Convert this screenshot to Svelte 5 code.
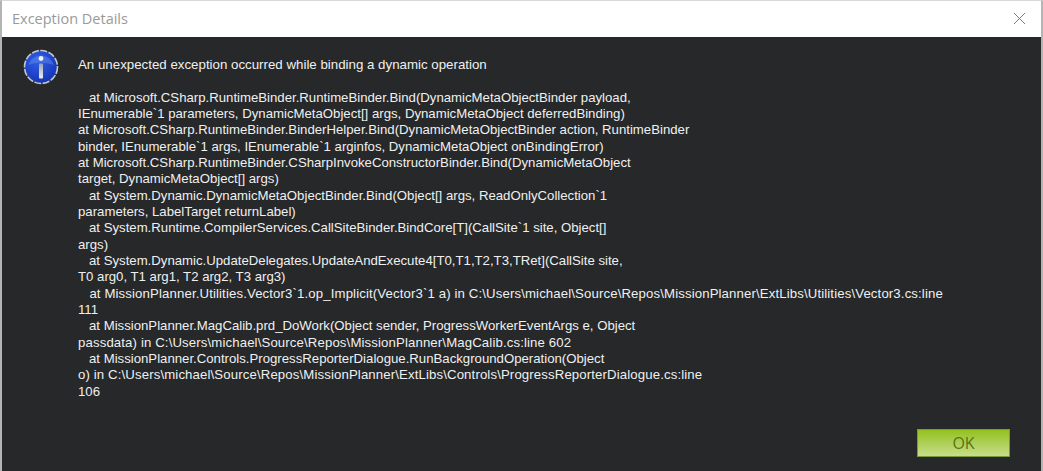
<script>
  const title = 'Exception Details'
  const message = 'An unexpected exception occurred while binding a dynamic operation'
  const trace = [
    '   at Microsoft.CSharp.RuntimeBinder.RuntimeBinder.Bind(DynamicMetaObjectBinder payload,',
    'IEnumerable`1 parameters, DynamicMetaObject[] args, DynamicMetaObject deferredBinding)',
    'at Microsoft.CSharp.RuntimeBinder.BinderHelper.Bind(DynamicMetaObjectBinder action, RuntimeBinder',
    'binder, IEnumerable`1 args, IEnumerable`1 arginfos, DynamicMetaObject onBindingError)',
    'at Microsoft.CSharp.RuntimeBinder.CSharpInvokeConstructorBinder.Bind(DynamicMetaObject',
    'target, DynamicMetaObject[] args)',
    '   at System.Dynamic.DynamicMetaObjectBinder.Bind(Object[] args, ReadOnlyCollection`1',
    'parameters, LabelTarget returnLabel)',
    '   at System.Runtime.CompilerServices.CallSiteBinder.BindCore[T](CallSite`1 site, Object[]',
    'args)',
    '   at System.Dynamic.UpdateDelegates.UpdateAndExecute4[T0,T1,T2,T3,TRet](CallSite site,',
    'T0 arg0, T1 arg1, T2 arg2, T3 arg3)',
    '   at MissionPlanner.Utilities.Vector3`1.op_Implicit(Vector3`1 a) in C:\\Users\\michael\\Source\\Repos\\MissionPlanner\\ExtLibs\\Utilities\\Vector3.cs:line',
    '111',
    '   at MissionPlanner.MagCalib.prd_DoWork(Object sender, ProgressWorkerEventArgs e, Object',
    'passdata) in C:\\Users\\michael\\Source\\Repos\\MissionPlanner\\MagCalib.cs:line 602',
    '   at MissionPlanner.Controls.ProgressReporterDialogue.RunBackgroundOperation(Object',
    'o) in C:\\Users\\michael\\Source\\Repos\\MissionPlanner\\ExtLibs\\Controls\\ProgressReporterDialogue.cs:line',
    '106'
  ]
</script>

<div class="window">
  <header class="titlebar">
    <span class="title">{title}</span>
    <svg class="close" viewBox="0 0 14 14" aria-label="Close">
      <path d="M1 1 L13 13 M13 1 L1 13" />
    </svg>
  </header>
  <main class="body">
    <div class="content">
      <svg class="info" viewBox="0 0 36 36" aria-hidden="true">
        <defs>
          <radialGradient id="ball" cx="0.4" cy="0.3" r="0.8">
            <stop offset="0" stop-color="#2f5fe8" />
            <stop offset="0.65" stop-color="#1c3fc4" />
            <stop offset="1" stop-color="#14309e" />
          </radialGradient>
          <linearGradient id="stem" x1="0" y1="0" x2="0" y2="1">
            <stop offset="0" stop-color="#9aa2b8" />
            <stop offset="1" stop-color="#f0f0f0" />
          </linearGradient>
        </defs>
        <circle cx="18" cy="18" r="16.5" fill="url(#ball)" stroke="#c4c6ca" stroke-width="1.6" stroke-dasharray="7 1.5" />
        <path d="M5 16 A13.5 13 0 0 1 31 16 Q18 11 5 16 Z" fill="#5f8ae6" opacity="0.5" />
        <circle cx="18" cy="9.5" r="2.4" fill="#f2f2f2" />
        <rect x="16" y="14.5" width="4" height="15" rx="1" fill="url(#stem)" />
      </svg>
      <div class="text">
        <p class="message">{message}</p>
        <div class="trace">
          {#each trace as line}
            <div class="line" class:path={line.includes('C:\\')}>{line}</div>
          {/each}
        </div>
      </div>
    </div>
    <footer class="actions">
      <button class="ok">OK</button>
    </footer>
  </main>
</div>

<style>
  :global(body) {
    margin: 0;
    background: #ffffff;
  }
  .window {
    width: 1043px;
    height: 471px;
    box-sizing: border-box;
    display: flex;
    flex-direction: column;
    background: #ffffff;
    border-left: 2px solid #b4b4b4;
    border-right: 2px solid #b4b4b4;
    border-top: 1px solid #d8d8d8;
    font-family: "Liberation Sans", Arial, sans-serif;
  }
  .titlebar {
    height: 36px;
    flex: none;
    display: flex;
    align-items: center;
    justify-content: space-between;
    padding: 0 15px 2px 10px;
    box-sizing: border-box;
    background: #ffffff;
  }
  .title {
    font-family: "Open Sans", "Noto Sans", sans-serif;
    font-size: 14.5px;
    color: #9a9a9a;
  }
  .close {
    width: 13px;
    height: 13px;
    fill: none;
    stroke: #707070;
    stroke-width: 1;
  }
  .body {
    flex: 1;
    display: flex;
    flex-direction: column;
    justify-content: space-between;
    background: #26282a;
  }
  .content {
    display: flex;
    align-items: flex-start;
    padding: 11px 0 0 21px;
    gap: 19px;
  }
  .info {
    width: 36px;
    height: 36px;
    flex: none;
    margin-top: 1px;
  }
  .text {
    color: #f0f0f0;
    font-size: 13.2px;
    line-height: 16.33px;
    padding-top: 9px;
  }
  .message {
    margin: 0 0 16.5px;
    font-size: 13.3px;
  }
  .line {
    white-space: pre;
  }
  .line.path {
    letter-spacing: 0.13px;
  }
  .actions {
    display: flex;
    justify-content: flex-end;
    padding: 0 31px 14px 0;
  }
  .ok {
    width: 93px;
    height: 28px;
    padding: 0;
    border: 1px solid #7b9a35;
    background: linear-gradient(#94c11f, #c6de8c);
    color: #567515;
    font-family: "Open Sans", "Noto Sans", sans-serif;
    font-size: 16px;
  }
</style>
